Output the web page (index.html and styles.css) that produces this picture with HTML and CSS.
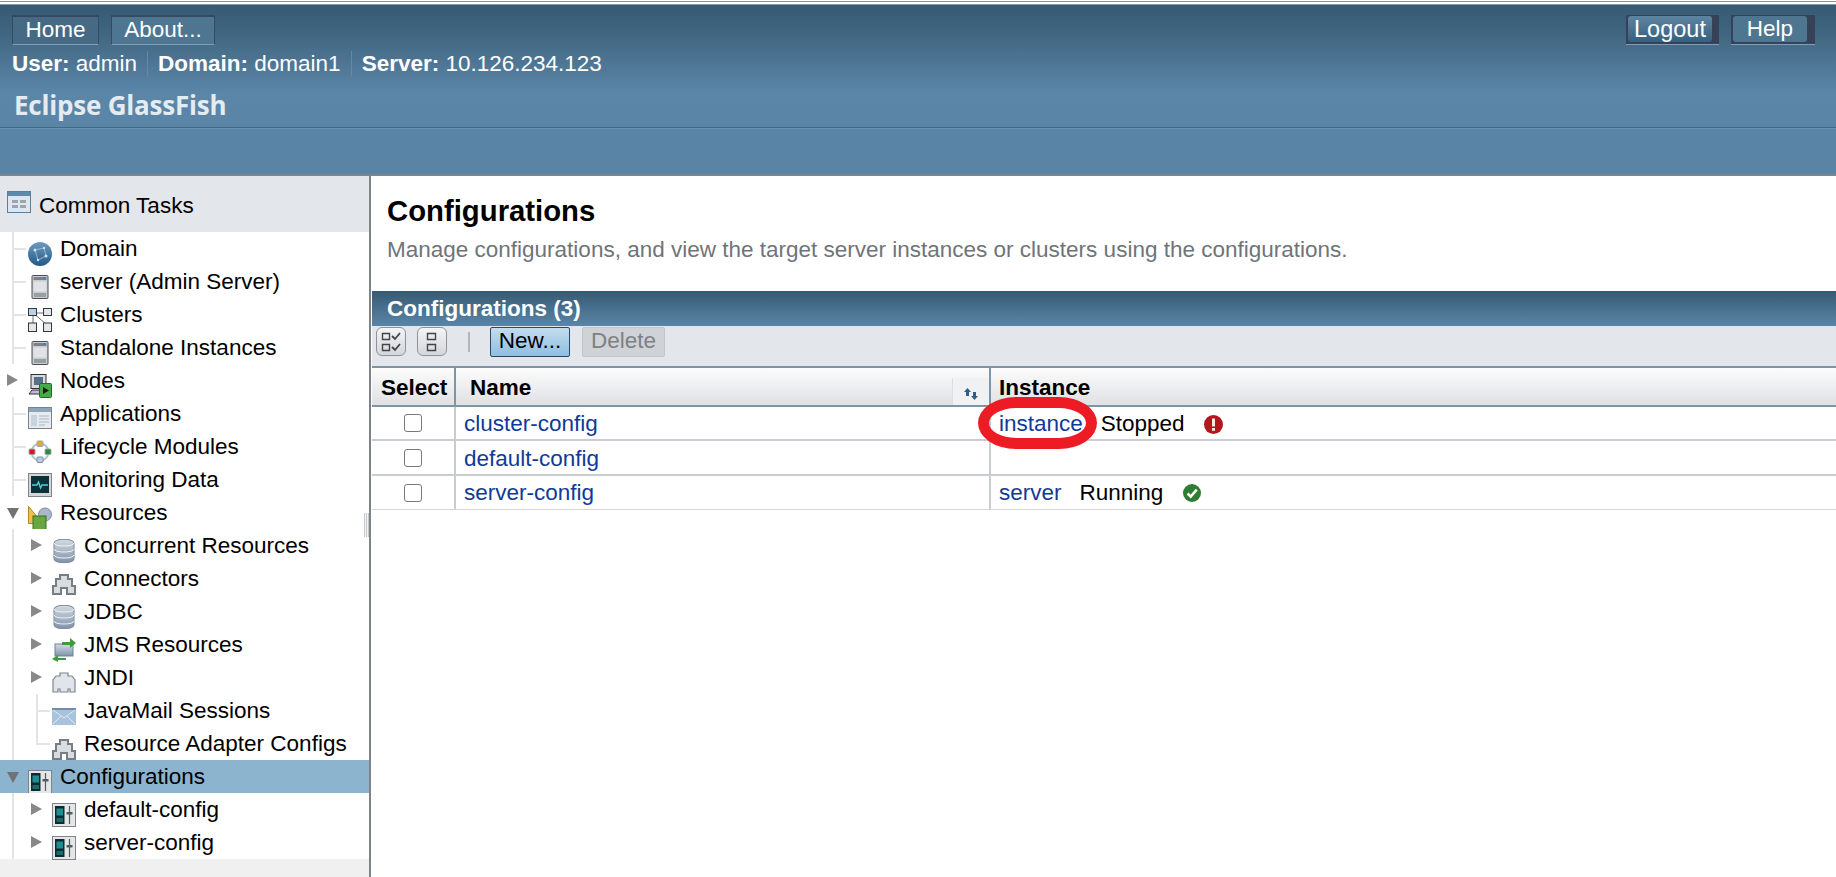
FILE: index.html
```html
<!DOCTYPE html>
<html>

<head>
	<meta charset="utf-8">
	<title>Configurations</title>
	<link rel="stylesheet" href="styles.css">
</head>

<body>
	<svg class="defs" width="0" height="0">
		<defs>
			<linearGradient id="gBlue" x1="0" y1="0" x2="0" y2="1">
				<stop offset="0" stop-color="#6f9abd" />
				<stop offset="1" stop-color="#1f5a88" />
			</linearGradient>
			<linearGradient id="gSteel" x1="0" y1="0" x2="0" y2="1">
				<stop offset="0" stop-color="#d3dbe4" />
				<stop offset="1" stop-color="#7f93aa" />
			</linearGradient>
			<symbol id="i-tasks" viewBox="0 0 24 24">
				<rect x="0.5" y="0.5" width="23" height="21" fill="#dfe6ee" stroke="#5f7f99" />
				<rect x="1" y="1" width="22" height="4" fill="#5d8bb0" />
				<path d="M5 9h6v3H5zM13 9h6v3h-6zM5 14h6v3H5zM13 14h6v3h-6z" fill="#9aa5b0" />
			</symbol>
			<symbol id="i-globe" viewBox="0 0 24 24">
				<circle cx="12" cy="12" r="12" fill="url(#gBlue)" />
				<path d="M7 8l9-2 2 8-8 4-3-10" fill="none" stroke="#a9c6dc" stroke-width="0.8" />
				<circle cx="7" cy="8" r="1.500" fill="#cfe0ec" />
				<circle cx="16" cy="6" r="1.200" fill="#cfe0ec" />
				<circle cx="18" cy="14" r="1.500" fill="#cfe0ec" />
				<circle cx="10" cy="18" r="1.200" fill="#cfe0ec" />
			</symbol>
			<symbol id="i-server" viewBox="0 0 24 24">
				<rect x="4" y="0.5" width="16" height="23" rx="1" fill="#c8ccd0" stroke="#4d5156" />
				<rect x="5.500" y="2" width="13" height="3" fill="#7d8287" />
				<rect x="15.500" y="2" width="2" height="2" fill="#3f7fd0" />
				<rect x="5.500" y="6.500" width="13" height="10" fill="#e0e2e5" />
				<path d="M7 18v4M9 18v4M11 18v4M13 18v4M15 18v4M17 18v4" stroke="#6d7277" stroke-width="1" />
			</symbol>
			<symbol id="i-cluster" viewBox="0 0 24 24">
				<path d="M5 5l14 0M5 5v10M5 5l13 11" stroke="#6b7075" fill="none" />
				<rect x="0.5" y="0.5" width="8" height="7" fill="#b9d0e6" stroke="#33383d" />
				<rect x="15.5" y="0.5" width="8" height="7" fill="#e4e6e8" stroke="#33383d" />
				<rect x="0.5" y="15" width="8" height="8.5" fill="#e4e6e8" stroke="#33383d" />
				<rect x="15.5" y="15" width="8" height="8.5" fill="#e4e6e8" stroke="#33383d" />
			</symbol>
			<symbol id="i-node" viewBox="0 0 24 24">
				<rect x="3" y="0.5" width="15" height="14" fill="#d8dadd" stroke="#2e3338" />
				<rect x="6" y="3" width="9" height="8" fill="#56708a" />
				<path d="M1 20l3-4h12v4z" fill="#cbb4d8" stroke="#2e3338" />
				<rect x="11.5" y="9.5" width="12" height="14" rx="1" fill="#49a84a" stroke="#1f6a26" />
				<path d="M15 13l6 3.5-6 3.5z" fill="#10240f" />
			</symbol>
			<symbol id="i-apps" viewBox="0 0 24 24">
				<rect x="0.5" y="0.5" width="23" height="21" fill="#e6ebf0" stroke="#7b8288" />
				<rect x="1" y="1" width="22" height="4" fill="#8ea5b9" />
				<path d="M3 8h6v11H3z" fill="#c7d4df" />
				<path d="M11 9h10M11 12h10M11 15h10M11 18h6" stroke="#aab7c3" />
			</symbol>
			<symbol id="i-life" viewBox="0 0 24 24">
				<circle cx="12" cy="12" r="8.500" fill="none" stroke="#b3c2cf" stroke-width="2" />
				<rect x="9" y="1" width="6" height="5.500" rx="1" fill="#e8a53a" stroke="#9aa7b2" />
				<rect x="1" y="9" width="6" height="5.500" rx="1" fill="#d8161c" stroke="#9aa7b2" />
				<rect x="17" y="9" width="6" height="5.500" rx="1" fill="#2d8a34" stroke="#9aa7b2" />
				<rect x="9" y="17" width="6" height="5.500" rx="1" fill="#b6cde0" stroke="#7b8fa1" />
			</symbol>
			<symbol id="i-monitor" viewBox="0 0 24 24">
				<rect x="0.5" y="0.5" width="23" height="23" fill="#d4d6d9" stroke="#7f8488" />
				<rect x="3" y="3" width="18" height="17" fill="#0c3238" />
				<path d="M4 12h5l1.500-3 2 6 1.500-3h6" fill="none" stroke="#4fd1d8" stroke-width="1.400" />
			</symbol>
			<symbol id="i-res" viewBox="0 0 24 24">
				<circle cx="17" cy="8.500" r="6.500" fill="#a9b9c9" stroke="#7d8b98" />
				<path d="M0.500 0.500l11 13v4h-11z" fill="#f2c04a" stroke="#b48722" />
				<rect x="5" y="10" width="13" height="13.500" fill="#6aa63f" stroke="#3b7021" />
			</symbol>
			<symbol id="i-db" viewBox="0 0 24 24">
				<path d="M2 4c0-5 20-5 20 0v16c0 5-20 5-20 0z" fill="url(#gSteel)" stroke="#7a8794" />
				<path d="M2 4c0 4 20 4 20 0M2 10c0 4 20 4 20 0M2 16c0 4 20 4 20 0" fill="none" stroke="#f0f3f6" />
			</symbol>
			<symbol id="i-conn" viewBox="0 0 24 24">
				<path d="M8 3h8v4h4v7h3v8h-8v-6H9v6H1v-8h3V7h4z" fill="#d8dde2" stroke="#777d83" stroke-width="2" />
			</symbol>
			<symbol id="i-jms" viewBox="0 0 24 24">
				<rect x="3" y="6" width="18" height="12" fill="url(#gSteel)" stroke="#6d8299" />
				<path d="M10 4h8V0l6 5-6 5V7h-8z" fill="#3f9a3c" />
				<path d="M14 20H6v-3l-6 4 6 3v-2h8z" fill="#3f9a3c" />
			</symbol>
			<symbol id="i-jndi" viewBox="0 0 24 24">
				<path d="M8 5V2h8v3h4l3 4v12h-5v-3h-2v3H8v-3H6v3H1V9l3-4z" fill="#dfe5eb" stroke="#7b8691" stroke-width="1.200" />
			</symbol>
			<symbol id="i-mail" viewBox="0 0 24 24">
				<rect x="0" y="4" width="24" height="17" fill="#a9c3dc" />
				<rect x="0" y="4" width="24" height="2" fill="#6f8ca8" />
				<path d="M1 6l11 8 11-8M1 20l8-8M23 20l-8-8" fill="none" stroke="#dce8f2" />
			</symbol>
			<symbol id="i-config" viewBox="0 0 24 24">
				<rect x="0.500" y="0.500" width="23" height="23" fill="#e4e6e8" stroke="#7f8488" />
				<rect x="3" y="3" width="9.500" height="18" fill="#0f2a2e" />
				<rect x="4.500" y="5.500" width="6.500" height="7" fill="#1f8e92" />
				<rect x="4.500" y="15" width="6.500" height="4" fill="#1a6a6e" />
				<path d="M17.500 3v18" stroke="#555b60" stroke-width="1.200" />
				<rect x="14.500" y="9" width="6" height="2.500" fill="#555b60" />
			</symbol>
		</defs>
	</svg>

	<div class="top-stripe"></div>

	<header class="masthead">
		<div class="mast-upper">
			<div class="mast-bar">
				<nav class="mast-nav">
					<a class="nav-tab" href="#">Home</a>
					<a class="nav-tab" href="#">About...</a>
				</nav>
				<div class="mast-actions">
					<a class="act-btn act-on" href="#"><span>Logout</span></a>
					<a class="act-btn" href="#"><span>Help</span></a>
				</div>
			</div>
			<div class="mast-info">
				<span class="info-item"><b>User:</b> admin</span>
				<span class="info-item"><b>Domain:</b> domain1</span>
				<span class="info-item"><b>Server:</b> 10.126.234.123</span>
			</div>
			<div class="brand">Eclipse GlassFish</div>
		</div>
	</header>

	<div class="workspace">
		<aside class="sidebar">
			<div class="tasks-head">
				<svg class="tasks-icon"><use href="#i-tasks" /></svg>
				<span class="tasks-label">Common Tasks</span>
			</div>
			<ul class="tree">
				<li class="row"><span class="twisty stub"></span><svg class="ico"><use href="#i-globe" /></svg>Domain</li>
				<li class="row"><span class="twisty stub"></span><svg class="ico"><use href="#i-server" /></svg>server (Admin Server)</li>
				<li class="row"><span class="twisty stub"></span><svg class="ico"><use href="#i-cluster" /></svg>Clusters</li>
				<li class="row"><span class="twisty stub"></span><svg class="ico"><use href="#i-server" /></svg>Standalone Instances</li>
				<li class="row"><span class="twisty closed"></span><svg class="ico"><use href="#i-node" /></svg>Nodes</li>
				<li class="row"><span class="twisty stub"></span><svg class="ico"><use href="#i-apps" /></svg>Applications</li>
				<li class="row"><span class="twisty stub"></span><svg class="ico"><use href="#i-life" /></svg>Lifecycle Modules</li>
				<li class="row"><span class="twisty stub"></span><svg class="ico"><use href="#i-monitor" /></svg>Monitoring Data</li>
				<li class="row"><span class="twisty open"></span><svg class="ico"><use href="#i-res" /></svg>Resources</li>
				<li class="row sub"><span class="twisty closed"></span><svg class="ico"><use href="#i-db" /></svg>Concurrent Resources</li>
				<li class="row sub"><span class="twisty closed"></span><svg class="ico"><use href="#i-conn" /></svg>Connectors</li>
				<li class="row sub"><span class="twisty closed"></span><svg class="ico"><use href="#i-db" /></svg>JDBC</li>
				<li class="row sub"><span class="twisty closed"></span><svg class="ico"><use href="#i-jms" /></svg>JMS Resources</li>
				<li class="row sub"><span class="twisty closed"></span><svg class="ico"><use href="#i-jndi" /></svg>JNDI</li>
				<li class="row sub"><span class="twisty stub"></span><svg class="ico"><use href="#i-mail" /></svg>JavaMail Sessions</li>
				<li class="row sub"><span class="twisty stub stub-end"></span><svg class="ico"><use href="#i-conn" /></svg>Resource Adapter Configs</li>
				<li class="row selected"><span class="twisty open"></span><svg class="ico"><use href="#i-config" /></svg>Configurations</li>
				<li class="row sub"><span class="twisty closed"></span><svg class="ico"><use href="#i-config" /></svg>default-config</li>
				<li class="row sub"><span class="twisty closed"></span><svg class="ico"><use href="#i-config" /></svg>server-config</li>
			</ul>
			<span class="sash"></span>
		</aside>

		<main class="content">
			<h1 class="page-title">Configurations</h1>
			<p class="page-help">Manage configurations, and view the target server instances or clusters using the configurations.</p>

			<section class="panel">
				<h2 class="panel-title">Configurations (3)</h2>
				<div class="toolbar">
					<button class="icon-btn" type="button">
						<svg width="22" height="22" viewBox="0 0 22 22">
							<path d="M2.500 2.500h7v6h-7zM2.500 13.500h7v6h-7z" fill="none" stroke="#444" stroke-width="1.400" />
							<path d="M12 5l3 3 5-6M12 16l3 3 5-6" fill="none" stroke="#444" stroke-width="1.800" />
						</svg>
					</button>
					<button class="icon-btn narrow" type="button">
						<svg width="16" height="22" viewBox="0 0 16 22">
							<path d="M3.500 2.500h8v6h-8zM3.500 13.500h8v6h-8z" fill="none" stroke="#444" stroke-width="1.400" />
						</svg>
					</button>
					<span class="tool-sep"></span>
					<button class="tool-btn primary" type="button">New...</button>
					<button class="tool-btn disabled" type="button">Delete</button>
				</div>
				<table class="grid">
					<colgroup>
						<col class="col-select">
						<col class="col-name">
						<col>
					</colgroup>
					<thead>
						<tr>
							<th class="th-select">Select</th>
							<th class="th-name">
								<div class="name-head">
									<span class="name-label">Name</span>
									<span class="sort-box">
										<svg width="14" height="12" viewBox="0 0 14 12">
											<path d="M3.500 0L7 4H5v4H2V4H0z" fill="#2f5f86" />
											<path d="M10.500 12L14 8h-2V4H9v4H7z" fill="#2f5f86" />
										</svg>
									</span>
								</div>
							</th>
							<th>Instance</th>
						</tr>
					</thead>
					<tbody>
						<tr>
							<td class="cell-check"><span class="check"></span></td>
							<td><a href="#">cluster-config</a></td>
							<td>
								<div class="inst">
									<a class="inst-first" href="#">instance</a>
									<span>Stopped</span>
									<svg class="state-stop" width="19" height="19" viewBox="0 0 19 19">
										<circle cx="9.500" cy="9.500" r="9.500" fill="#b3161c" />
										<rect x="8" y="3.500" width="3" height="8" fill="#fbe9e9" />
										<rect x="8" y="13" width="3" height="2.800" fill="#fbe9e9" />
									</svg>
								</div>
							</td>
						</tr>
						<tr class="row-tall">
							<td class="cell-check"><span class="check"></span></td>
							<td><a href="#">default-config</a></td>
							<td></td>
						</tr>
						<tr>
							<td class="cell-check"><span class="check"></span></td>
							<td><a href="#">server-config</a></td>
							<td>
								<div class="inst">
									<a class="inst-second" href="#">server</a>
									<span>Running</span>
									<svg class="state-run" width="18" height="18" viewBox="0 0 18 18">
										<circle cx="9" cy="9" r="9" fill="#2f7d32" />
										<path d="M4.500 9.500l3.200 3.200 6-7" fill="none" stroke="#fff" stroke-width="2.600" />
									</svg>
								</div>
							</td>
						</tr>
					</tbody>
				</table>
			</section>
		</main>
	</div>

	<span class="callout"></span>
</body>

</html>
```

FILE: styles.css
```css
* {
	margin: 0;
	padding: 0;
	box-sizing: border-box;
}

ul {
	list-style: none;
}

a {
	text-decoration: none;
}

html,
body {
	height: 877px;
	overflow: hidden;
}

body {
	position: relative;
	display: flex;
	flex-direction: column;
	font-family: "Liberation Sans", Arial, sans-serif;
	font-size: 22.5px;
	color: #000;
	background: #fff;
}

.defs {
	position: absolute;
}

.top-stripe {
	height: 5px;
	flex: none;
	background: linear-gradient(#fff 0, #fff 1px, #8c9296 1px, #8c9296 2px, #fff 2px, #fff 4px, #7f98aa 4px);
}

/* masthead */
.masthead {
	height: 171px;
	flex: none;
	border-bottom: 2px solid #7f8386;
	background: #5a84a5;
}

.mast-upper {
	height: 123px;
	border-bottom: 1px solid #436a85;
	box-shadow: 0 1px 0 #6c93b0;
	background: linear-gradient(#365a73 0, #3f647e 25px, #5b86a8 88px, #5a85a6 100%);
	padding: 10px 0 0 12px;
}

.mast-bar {
	display: flex;
	justify-content: space-between;
	height: 30px;
	padding-right: 21px;
}

.mast-nav {
	display: flex;
	gap: 12px;
}

.nav-tab {
	display: flex;
	align-items: center;
	justify-content: center;
	height: 30px;
	padding-bottom: 2px;
	color: #fff;
	background: #4e7690;
	border: 1px solid #37495f;
	border-bottom-color: #7fa0b8;
	border-top-width: 2px;
}

.nav-tab:first-child {
	width: 87px;
	background: #466a84;
}

.nav-tab:last-child {
	width: 104px;
}

.mast-actions {
	display: flex;
	gap: 12px;
}

.act-btn {
	display: block;
	height: 30px;
	padding: 1px 8px 2px 2px;
	background: #364257;
	border-bottom: 1px solid #7fa0b8;
	color: #fff;
}

.act-btn span {
	display: flex;
	align-items: center;
	justify-content: center;
	width: 74px;
	height: 26px;
	border-radius: 3px;
	background: #4f7690;
}

.act-on {
	padding-right: 7px;
}

.act-on span {
	width: 84px;
	font-size: 23.5px;
	background: linear-gradient(#5d84a0, #36607f);
}

.mast-info {
	display: flex;
	align-items: center;
	height: 26px;
	margin-top: 6px;
	color: #fff;
}

.info-item+.info-item {
	border-left: 1px solid #6288a4;
	margin-left: 10px;
	padding-left: 10px;
}

.brand {
	margin-top: 13px;
	margin-left: 2px;
	font-family: "Open Sans", sans-serif;
	font-size: 26px;
	font-weight: 700;
	line-height: 30px;
	letter-spacing: -0.2px;
	color: #e4ecf2;
}

/* body of the page */
.workspace {
	flex: 1;
	display: flex;
	min-height: 0;
}

.sidebar {
	position: relative;
	width: 371px;
	flex: none;
	background: #f0f0f0;
	border-right: 2px solid #7f8386;
}

.tasks-head {
	display: flex;
	align-items: center;
	gap: 8px;
	height: 56px;
	padding-left: 7px;
	background: #e3e6eb;
}

.tasks-icon {
	width: 24px;
	height: 24px;
	margin-top: -3px;
}

.tasks-label {
	margin-top: 4px;
}

.tree {
	background: linear-gradient(#e4e4e4, #e4e4e4) 12px 0 / 2px 100% no-repeat, #fff;
}

.row {
	display: flex;
	align-items: center;
	height: 33px;
}

.row.selected {
	background: #8db4cf;
}

.twisty {
	position: relative;
	display: block;
	width: 28px;
	height: 33px;
	flex: none;
}

.row.sub {
	padding-left: 28px;
}

.row.sub .twisty {
	width: 24px;
}

.twisty.closed,
.twisty.open {
	background: #fff;
}

.selected .twisty.open {
	background: #8db4cf;
}

.twisty.closed::after {
	content: "";
	position: absolute;
	left: 7px;
	top: 10px;
	border-left: 11px solid #888;
	border-top: 6px solid transparent;
	border-bottom: 6px solid transparent;
}

.row.sub .twisty.closed::after {
	left: 3px;
}

.twisty.open::after {
	content: "";
	position: absolute;
	left: 7px;
	top: 12px;
	border-top: 11px solid #6f7376;
	border-left: 6px solid transparent;
	border-right: 6px solid transparent;
}

.twisty.stub::after {
	content: "";
	position: absolute;
	left: 14px;
	top: 16px;
	width: 12px;
	height: 2px;
	background: #e4e4e4;
}

.row.sub .twisty.stub::after {
	left: 8px;
	width: 14px;
}

.row.sub .twisty.stub::before {
	content: "";
	position: absolute;
	left: 8px;
	top: 0;
	width: 2px;
	height: 33px;
	background: #e4e4e4;
}

.row.sub .twisty.stub-end::before {
	height: 17px;
}

.ico {
	width: 24px;
	height: 24px;
	flex: none;
	margin: 10px 8px 0 0;
}

.sash {
	position: absolute;
	right: 0;
	top: 337px;
	width: 5px;
	height: 24px;
	background: repeating-linear-gradient(90deg, #c4c8cc 0, #c4c8cc 1px, #f4f4f4 1px, #f4f4f4 2px);
}

/* content pane */
.content {
	flex: 1;
	min-width: 0;
	padding-left: 1px;
}

.page-title {
	margin: 17px 0 0 15px;
	font-size: 29.3px;
	line-height: 36px;
	font-weight: bold;
}

.page-help {
	margin: 7px 0 0 15px;
	font-size: 22.5px;
	line-height: 28px;
	color: #6f7479;
}

.panel {
	margin-top: 27px;
}

.panel-title {
	display: flex;
	align-items: center;
	height: 35px;
	padding-left: 15px;
	font-size: 22.5px;
	font-weight: bold;
	color: #fff;
	background: linear-gradient(#365a73, #5a85a8);
}

.toolbar {
	display: flex;
	align-items: flex-start;
	height: 40px;
	padding: 1px 0 0 4px;
	background: #e3e6eb;
}

.icon-btn {
	display: flex;
	align-items: center;
	justify-content: center;
	width: 30px;
	height: 29px;
	margin-right: 11px;
	border: 1.500px solid #8f9396;
	border-radius: 6px;
	background: linear-gradient(#f4f5f7, #d3d6db);
}

.tool-sep {
	width: 2px;
	height: 20px;
	margin: 5px 20px 0 10px;
	background: #b4b8bc;
}

.tool-btn {
	height: 30px;
	padding-bottom: 3px;
	font-family: inherit;
	font-size: 22.5px;
	border-radius: 2px;
}

.tool-btn.primary {
	width: 80px;
	margin-right: 12px;
	color: #000;
	border: 1px solid #27486a;
	background: linear-gradient(#c4dcef, #8fbfe0);
}

.tool-btn.disabled {
	width: 83px;
	color: #7d8185;
	border: 1px solid #c2c5c9;
	background: #cfd2d7;
}

.grid {
	width: 100%;
	table-layout: fixed;
	border-collapse: separate;
	border-spacing: 0;
	border-top: 2px solid #7e95a3;
}

.col-select {
	width: 82px;
}

.col-name {
	width: 535px;
}

.grid th {
	height: 39px;
	padding: 2px 0 0 8px;
	text-align: left;
	font-size: 22.5px;
	background: linear-gradient(#fcfcfc, #dfe1e4);
	border-bottom: 2px solid #7e95a3;
	border-left: 2px solid #7e95a3;
}

.grid th.th-select {
	padding-left: 9px;
	border-left: 0;
}

.grid th.th-name {
	padding: 0 0 0 14px;
}

.name-head {
	display: flex;
	align-items: center;
	justify-content: space-between;
	height: 37px;
}

.name-label {
	padding-top: 2px;
}

.sort-box {
	display: flex;
	align-items: center;
	justify-content: center;
	width: 37px;
	height: 27px;
	margin-top: 10px;
	padding-top: 5px;
	border-left: 1px solid #dcdee1;
	background: #f0f1f3;
}

.grid td {
	height: 34px;
	padding: 2px 0 0 8px;
	border-bottom: 2px solid #c9cdd1;
	border-left: 2px solid #c9cdd1;
}

.grid tr:last-child td {
	padding-top: 0;
	border-bottom-width: 1px;
	border-bottom-color: #d4d7da;
}

.grid .row-tall td {
	height: 35px;
}

.grid td.cell-check,
.grid tr:last-child td.cell-check {
	padding: 0 0 0 32px;
	border-left: 0;
}

.grid a {
	color: #0f3a96;
}

.check {
	display: block;
	width: 18px;
	height: 18px;
	border: 1.500px solid #77797c;
	border-radius: 3px;
	background: #fff;
}

.inst {
	display: flex;
	align-items: center;
}

.inst-first {
	margin-right: 18px;
}

.inst-second {
	margin-right: 18px;
}

.state-stop {
	margin-left: 19px;
}

.state-run {
	margin-left: 20px;
}

/* red marker drawn on top of the screenshot */
.callout {
	position: absolute;
	left: 978px;
	top: 397px;
	width: 119px;
	height: 52px;
	border: 11px solid #ed1c24;
	border-radius: 38px / 26px;
}
```
